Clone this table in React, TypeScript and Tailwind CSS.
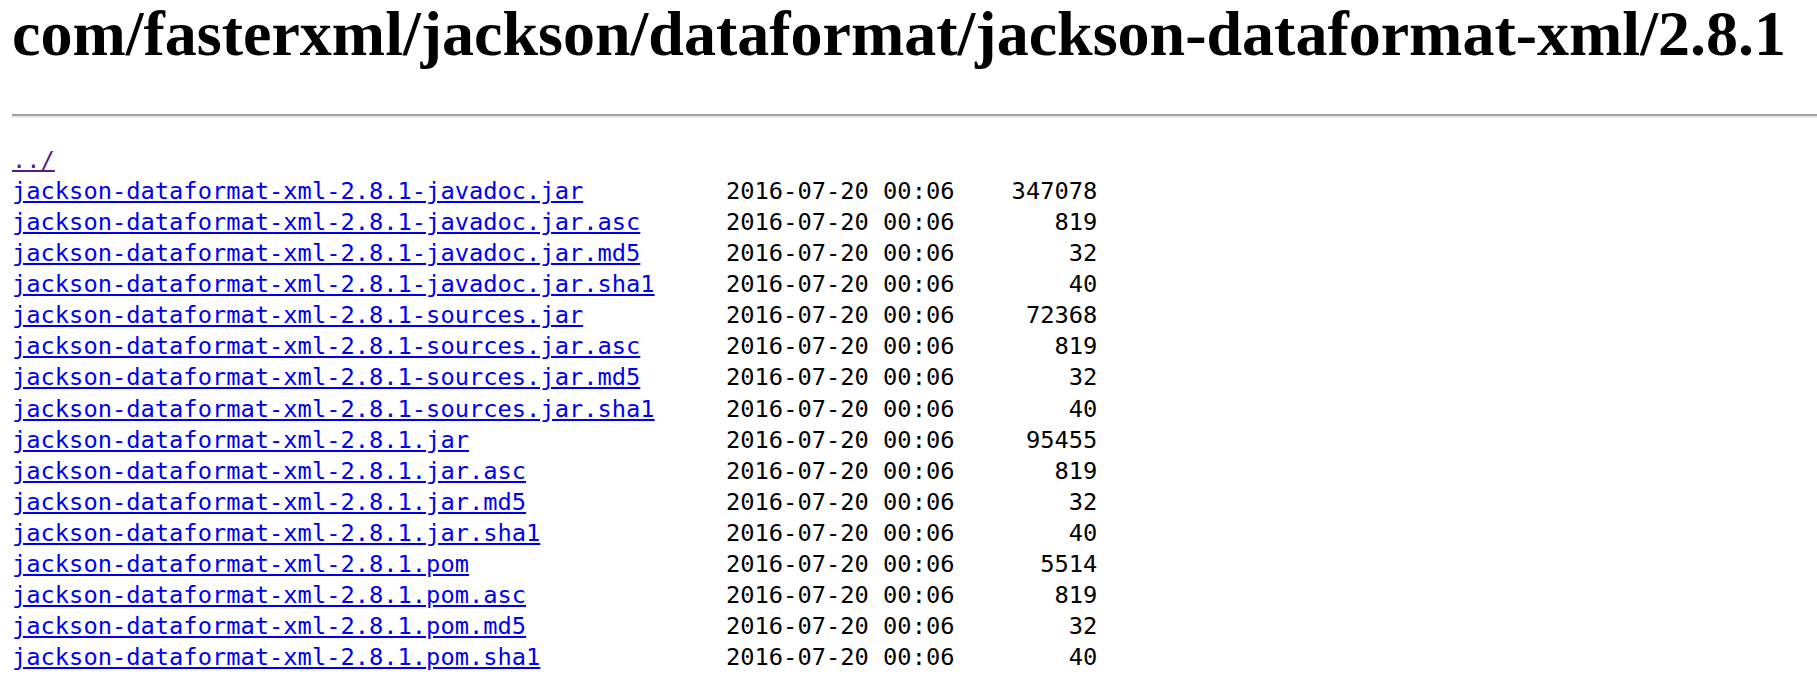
const files: [string, string][] = [
  ['jackson-dataformat-xml-2.8.1-javadoc.jar', '347078'],
  ['jackson-dataformat-xml-2.8.1-javadoc.jar.asc', '819'],
  ['jackson-dataformat-xml-2.8.1-javadoc.jar.md5', '32'],
  ['jackson-dataformat-xml-2.8.1-javadoc.jar.sha1', '40'],
  ['jackson-dataformat-xml-2.8.1-sources.jar', '72368'],
  ['jackson-dataformat-xml-2.8.1-sources.jar.asc', '819'],
  ['jackson-dataformat-xml-2.8.1-sources.jar.md5', '32'],
  ['jackson-dataformat-xml-2.8.1-sources.jar.sha1', '40'],
  ['jackson-dataformat-xml-2.8.1.jar', '95455'],
  ['jackson-dataformat-xml-2.8.1.jar.asc', '819'],
  ['jackson-dataformat-xml-2.8.1.jar.md5', '32'],
  ['jackson-dataformat-xml-2.8.1.jar.sha1', '40'],
  ['jackson-dataformat-xml-2.8.1.pom', '5514'],
  ['jackson-dataformat-xml-2.8.1.pom.asc', '819'],
  ['jackson-dataformat-xml-2.8.1.pom.md5', '32'],
  ['jackson-dataformat-xml-2.8.1.pom.sha1', '40'],
]

const DATE = '2016-07-20 00:06'

export default function App() {
  return (
    <div className="min-h-screen overflow-hidden bg-white pl-[12px] text-black">
      <h1 className="m-0 whitespace-nowrap font-['Liberation_Serif',_serif] text-[64px] leading-[67px] font-bold">
        com/fasterxml/jackson/dataformat/jackson-dataformat-xml/2.8.1
      </h1>
      <hr className="mt-[47px] -mr-4 border-0 border-t-2 border-b-2 border-t-[#a0a0a0] border-b-[#ececec]" />
      <pre className="mt-[27px] font-['DejaVu_Sans_Mono',_monospace] text-[23.72px] leading-[31.07px]">
        <a href="#" className="text-[#551a8b] underline">../</a>
        {'\n'}
        {files.map(([name, size]) => (
          <span key={name}>
            <a href="#" className="text-[#0000ee] underline">{name}</a>
            {' '.repeat(50 - name.length) + DATE + size.padStart(10, ' ') + '\n'}
          </span>
        ))}
      </pre>
    </div>
  )
}
